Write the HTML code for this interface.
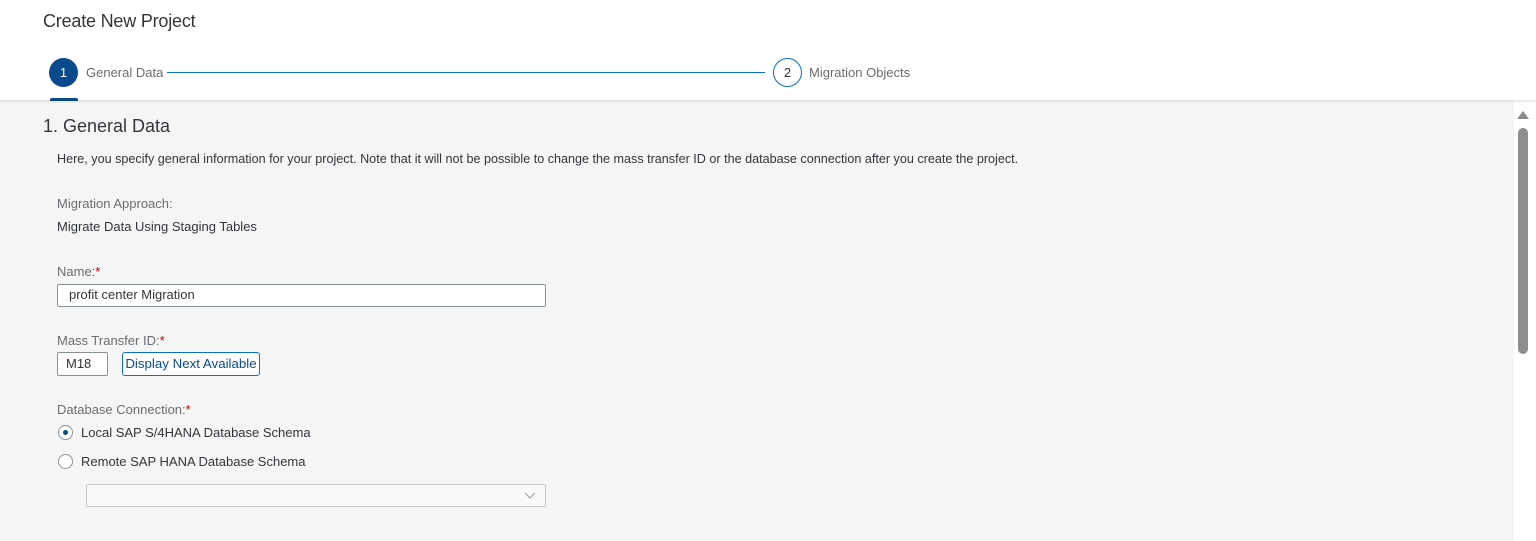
<!DOCTYPE html>
<html><head><style>
*{margin:0;padding:0;box-sizing:border-box}
body{width:1536px;height:541px;overflow:hidden;background:#f5f5f5;font-family:"Liberation Sans",sans-serif;color:#32363a;position:relative}
.hdr{position:absolute;left:0;top:0;width:1536px;height:100px;background:#fff;box-shadow:0 1px 3px rgba(0,0,0,.15);z-index:2}
.abs{position:absolute;white-space:nowrap}
.lbl{font-size:13px;color:#6a6d70}
.star{color:#bb0000}
.inp{position:absolute;background:#fff;border:1px solid #89919a;border-radius:2px;font-size:13px;padding-left:11px;line-height:20px}
.radio{position:absolute;width:15px;height:15px;border:1px solid #89919a;border-radius:50%;background:#fff}
</style></head><body>
<div class="hdr">
<div class="abs" style="left:43px;top:11px;font-size:18px;color:#32363a;letter-spacing:-0.2px">Create New Project</div>
<div class="abs" style="left:49px;top:58px;width:29px;height:29px;border-radius:50%;background:#0a4a8c;color:#fff;font-size:13px;text-align:center;line-height:29px">1</div>
<div class="abs" style="left:86px;top:65px;font-size:13px;color:#6a6d70">General Data</div>
<div class="abs" style="left:167px;top:72px;width:598px;height:1px;background:#0a6ed1"></div>
<div class="abs" style="left:773px;top:58px;width:29px;height:29px;border-radius:50%;border:1px solid #0a6ed1;background:#fff;color:#32363a;font-size:13px;text-align:center;line-height:27px">2</div>
<div class="abs" style="left:809px;top:65px;font-size:13px;color:#6a6d70">Migration Objects</div>
<div class="abs" style="left:50px;top:98px;width:28px;height:3px;background:#0a4a8c;border-radius:2px 2px 0 0"></div>
</div>
<div class="abs" style="left:1514px;top:100px;width:22px;height:441px;background:#fff"></div>
<div class="abs" style="left:1517px;top:111px;width:0;height:0;border-left:6px solid transparent;border-right:6px solid transparent;border-bottom:8px solid #8a8a8a"></div>
<div class="abs" style="left:1518px;top:128px;width:10px;height:226px;background:#8e8e8e;border-radius:5px"></div>

<div class="abs" style="left:43px;top:116px;font-size:18px">1. General Data</div>
<div class="abs" style="left:57px;top:152px;font-size:12.6px">Here, you specify general information for your project. Note that it will not be possible to change the mass transfer ID or the database connection after you create the project.</div>
<div class="abs lbl" style="left:57px;top:196px">Migration Approach:</div>
<div class="abs" style="left:57px;top:219px;font-size:13px">Migrate Data Using Staging Tables</div>
<div class="abs lbl" style="left:57px;top:264px">Name:<span class="star">*</span></div>
<div class="inp" style="left:57px;top:284px;width:489px;height:23px">profit center Migration</div>
<div class="abs lbl" style="left:57px;top:333px">Mass Transfer ID:<span class="star">*</span></div>
<div class="inp" style="left:57px;top:352px;width:51px;height:24px;padding-left:8px;line-height:22px">M18</div>
<div class="abs" style="left:122px;top:352px;width:138px;height:24px;border:1px solid #0a6ed1;border-radius:3px;background:#fff;color:#0a4a8c;font-size:13.3px;text-align:center;line-height:22px">Display Next Available</div>
<div class="abs lbl" style="left:57px;top:402px">Database Connection:<span class="star">*</span></div>
<div class="radio" style="left:58px;top:425px"><div style="position:absolute;left:4px;top:4px;width:5px;height:5px;border-radius:50%;background:#0a4a8c"></div></div>
<div class="abs" style="left:81px;top:425px;font-size:13px">Local SAP S/4HANA Database Schema</div>
<div class="radio" style="left:58px;top:454px"></div>
<div class="abs" style="left:81px;top:454px;font-size:13px">Remote SAP HANA Database Schema</div>
<div class="inp" style="left:86px;top:484px;width:460px;height:23px;border-color:#c5c9cc;background:#fafafa">
<svg style="position:absolute;right:9px;top:7px" width="12" height="8"><path d="M1 1L6 6L11 1" stroke="#a0a4a8" fill="none" stroke-width="1.2"/></svg></div>
</body></html>
